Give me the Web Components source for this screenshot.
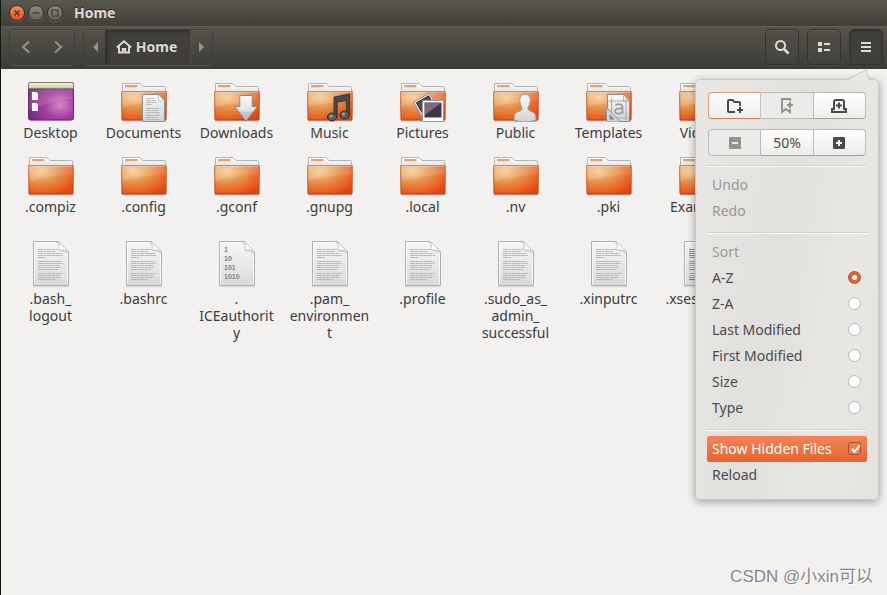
<!DOCTYPE html>
<html lang="en">
<head>
<meta charset="utf-8">
<title>Home</title>
<style>
html,body{margin:0;height:100%}
body{font:14px/17px "Noto Sans","Open Sans",sans-serif;color:#3c3c3c;background:#f2f1f0}
</style>
</head>
<body>
<file-window>
  <title-bar slot="title">Home</title-bar>
  <tool-bar slot="tools"><span>Home</span><view-menu slot="menu"></view-menu></tool-bar>
  <file-grid>
    <file-item kind="desktop">Desktop</file-item>
    <file-item kind="documents">Documents</file-item>
    <file-item kind="downloads">Downloads</file-item>
    <file-item kind="music">Music</file-item>
    <file-item kind="pictures">Pictures</file-item>
    <file-item kind="public">Public</file-item>
    <file-item kind="templates">Templates</file-item>
    <file-item kind="folder">Videos</file-item>
    <file-item kind="folder">.compiz</file-item>
    <file-item kind="folder">.config</file-item>
    <file-item kind="folder">.gconf</file-item>
    <file-item kind="folder">.gnupg</file-item>
    <file-item kind="folder">.local</file-item>
    <file-item kind="folder">.nv</file-item>
    <file-item kind="folder">.pki</file-item>
    <file-item kind="folder">Examples</file-item>
    <file-item kind="text">.bash_<br>logout</file-item>
    <file-item kind="text">.bashrc</file-item>
    <file-item kind="binary">.<br>ICEauthorit<br>y</file-item>
    <file-item kind="text">.pam_<br>environmen<br>t</file-item>
    <file-item kind="text">.profile</file-item>
    <file-item kind="text">.sudo_as_<br>admin_<br>successful</file-item>
    <file-item kind="text">.xinputrc</file-item>
    <file-item kind="log">.xsessionrc</file-item>
  </file-grid>
  <water-mark slot="mark">CSDN @小xin可以</water-mark>
</file-window>

<script>
const define = (name, html) => customElements.define(name, class extends HTMLElement {
  connectedCallback() {
    if (this.shadowRoot) return;
    const t = document.createElement('template');
    t.innerHTML = typeof html === 'function' ? html(this) : html;
    this.attachShadow({mode: 'open'}).append(t.content.cloneNode(true));
  }
});

define('file-window', `<style>
:host{display:flex;flex-direction:column;min-height:100vh;box-sizing:border-box;border-left:1px solid #10180c;background:#f2f1f0;position:relative}
main{flex:1;min-width:0;overflow:hidden}
footer{display:flex;justify-content:flex-end;padding:0 14px 8px 0}
</style><slot name="title"></slot><slot name="tools"></slot><main><slot></slot></main><footer><slot name="mark"></slot></footer>`);

define('water-mark', `<style>
:host{display:block;font:17px/20px "Liberation Sans","Noto Sans CJK SC",sans-serif;color:#85858a;text-shadow:1px 1px 0 #fff}
</style><slot></slot>`);

define('title-bar', `<style>
:host{display:flex;align-items:center;height:26px;padding:0 0 0 8px;background:linear-gradient(#5a574e,#3f3e39);color:#dfdbd2}
.set{display:flex;gap:3px}
button{width:16px;height:16px;padding:0;border:1px solid #32312d;border-radius:50%;background:linear-gradient(#8a877e,#64625b);box-shadow:0 1px 0 #65625a;display:grid;place-items:center}
.close{background:linear-gradient(#f58a63,#e4521f)}
svg{display:block;stroke:#3a3935;fill:none}
h1{margin:0 0 0 11px;font-size:14px;line-height:26px;font-weight:700;text-shadow:0 -1px 0 #2c2b28}
</style><div class="set">
<button class="close" aria-label="Close"><svg width="8" height="8"><path d="M1.5 1.5l5 5m0-5l-5 5" stroke-width="1.3"/></svg></button>
<button aria-label="Minimise"><svg width="8" height="8"><path d="M.5 4h7" stroke-width="1.2"/></svg></button>
<button aria-label="Maximise"><svg width="8" height="8"><path d="M1 1h6v6H1z" stroke-width="1.2"/></svg></button>
</div><h1><slot></slot></h1>`);

define('tool-bar', `<style>
:host{display:flex;align-items:center;gap:8px;height:43px;box-sizing:border-box;padding:0 4px 2px 8px;border-top:1px solid #625f51;background:linear-gradient(#56544b,#3c3b37);color:#dfdbd2;position:relative;z-index:2}
.group{display:flex;height:36px;box-sizing:border-box;border:1px solid #403f3a;border-radius:5px;box-shadow:0 1px 0 #55534b,inset 0 1px 0 #5d5a52}
button{font:inherit;color:inherit;margin:0;padding:0;border:0;background:none;display:flex;align-items:center;justify-content:center;box-sizing:border-box}
.nav button{width:32px}
.step{width:21px}
.here{width:86px;gap:4px;padding-right:3px;font-weight:700;line-height:34px;background:#403f3a;border-left:1px solid #34332f;border-right:1px solid #504e47;box-shadow:inset 2px 2px 3px #32312d;text-shadow:0 -1px 0 #2c2b28}
.sq{width:34px;height:36px;border:1px solid #33322e;border-radius:5px;box-shadow:inset 0 1px 0 #615e55,0 1px 0 #4c4a44;background:linear-gradient(#524f47,#42413c)}
.on{background:#403f3a;box-shadow:inset 0 1px 2px #2d2c29}
.gap{flex:1}
svg{display:block}
.menu{position:absolute;right:8px;top:42px}
</style>
<div class="group nav"><button aria-label="Back"><svg width="12" height="14" fill="none" stroke="#97948c" stroke-width="2"><path d="M9 1.5L3 7l6 5.500"/></svg></button><button aria-label="Forward"><svg width="12" height="14" fill="none" stroke="#97948c" stroke-width="2"><path d="M3 1.500L9 7l-6 5.500"/></svg></button></div>
<div class="group"><button class="step" aria-label="Scroll path left"><svg width="6" height="10"><path d="M6 0v10L1 5z" fill="#97948c"/></svg></button><button class="here"><svg width="16" height="14"><path d="M.8 7.500L8 1.300l7.200 6.200" fill="none" stroke="#dfdbd2" stroke-width="2"/><path d="M3 6.500v6h3.800V9h2.400v3.500H13v-6" fill="none" stroke="#dfdbd2" stroke-width="2"/></svg><slot></slot></button><button class="step" aria-label="Scroll path right"><svg width="6" height="10"><path d="M0 0v10l5-5z" fill="#97948c"/></svg></button></div>
<div class="gap"></div>
<button class="sq" aria-label="Search"><svg width="16" height="16" fill="none" stroke="#dfdbd2"><circle cx="6.500" cy="6.500" r="4.500" stroke-width="2"/><path d="M10 10l4.500 4.500" stroke-width="2.600"/></svg></button>
<button class="sq" aria-label="List view"><svg width="14" height="12" fill="#dfdbd2"><path d="M1 1h4v4H1zM7 2h6v2H7zM1 7h4v4H1zM7 8h6v2H7z"/></svg></button>
<button class="sq on" aria-label="Menu"><svg width="10" height="12" fill="#dfdbd2"><path d="M0 1h10v2H0zM0 5h10v2H0zM0 9h10v2H0z"/></svg></button>
<div class="menu"><slot name="menu"></slot></div>`);

define('file-grid', `<style>
:host{display:grid;grid-template-columns:repeat(8,93px);row-gap:15px;padding:13px 3px}
</style><slot></slot>`);

const lines = (ys, x, widths, colours) => ys.map((y, i) =>
  `<path d="M${x} ${y}h${widths[i]}" stroke="${colours ? colours[i] : '#b9b9b9'}" stroke-dasharray="5 .4 3 .3"/>`).join('');
const FOLDER = `<defs>
<radialGradient id="f" cx=".28" cy=".2" r=".9"><stop offset="0" stop-color="#f3c98c"/><stop offset=".45" stop-color="#e59048"/><stop offset=".85" stop-color="#eb5a1e"/><stop offset="1" stop-color="#dd4813"/></radialGradient>
<linearGradient id="b" x2="0" y2="1"><stop stop-color="#fff"/><stop offset="1" stop-color="#ddd"/></linearGradient>
<linearGradient id="g" x2="1" y2="1"><stop stop-color="#fff" stop-opacity=".28"/><stop offset="1" stop-color="#fff" stop-opacity=".03"/></linearGradient>
<linearGradient id="p" x2="0" y2="1"><stop stop-color="#fafafa"/><stop offset="1" stop-color="#d2d2d2"/></linearGradient>
<linearGradient id="e" x2="0" y2="1"><stop stop-color="#cf8a57"/><stop offset="1" stop-color="#b83a14"/></linearGradient></defs>
<path d="M2 38.700h44" stroke="#000" stroke-opacity=".18" stroke-width="1.500"/>
<path d="M2.500 12V1.500H19q1 0 2 1l2 2h21.500q1 0 1 1V12z" fill="url(#b)" stroke="#b4b4b4"/>
<path d="M5 3h12.500v2.200H5z" fill="#eda06c"/>
<path d="M1.500 9.500h45L46 37.500q0 .5-.5.5h-43q-.5 0-.5-.5z" fill="url(#f)" stroke="url(#e)"/>
<path d="M2.500 10.500h43v8Q24 19.500 2.500 25z" fill="url(#g)"/>
<path d="M2.500 10.500h43" stroke="#fff" stroke-opacity=".3"/>`;
const EMBLEM = {
  folder: '',
  documents: `<path d="M22.500 12.500h16l6 6.500v20.500h-22z" fill="url(#p)" stroke="#8e8e8e"/><path d="M38.500 12.500v6.500h6z" fill="#fff" stroke="#aaa" stroke-width=".6"/>${lines([16.5,18.5,20.5,22.5,26.5,28.5,30.5,33.5,35.5,37.5],26,[8,10,11,6,15,12,14,14,11,14])}`,
  downloads: `<path d="M26.800 13.500h12.400v11h5.300L33 39 21.500 24.500h5.300z" fill="url(#p)" stroke="#8f8a85" stroke-linejoin="round"/><path d="M33 39L25.500 29.500h15z" fill="#888" fill-opacity=".28"/>`,
  music: `<path d="M28 15l15.500-3v21.500h-3V18.500l-9.300 1.800V35.500H28z" fill="#4b4b4b" stroke="#2c2c2c" stroke-width=".8"/><ellipse cx="26" cy="35" rx="4.600" ry="4" fill="#5c5c5c" stroke="#2b2b2b"/><ellipse cx="38.500" cy="33" rx="4.600" ry="4" fill="#5c5c5c" stroke="#2b2b2b"/><circle cx="25" cy="34" r="1.500" fill="#a0a0a0"/><circle cx="37.500" cy="32" r="1.500" fill="#a0a0a0"/>`,
  pictures: `<g transform="rotate(-30 25 23)"><path d="M17.500 15.500h18v18h-18z" fill="#f7f7f7" stroke="#999"/><path d="M19.500 17.500h14v12h-14z" fill="#5b4a5c" stroke="#302935"/></g><path d="M23.500 18.500h21v21h-21z" fill="#fff" stroke="#999"/><path d="M25.500 20.500h17v15h-17z" fill="#41344a"/><path d="M26 21h16L26 33z" fill="#a08594" fill-opacity=".65"/>`,
  public: `<ellipse cx="33" cy="39.500" rx="11" ry="1.300" fill="#000" fill-opacity=".25"/><path d="M33 12.500c3.800 0 5.200 2.500 5.200 6 0 3-1.200 5.500-2.200 7 0 2.500.5 3 3.500 4 4 1.200 4.500 4 4.500 8.500q-5 2-11 2t-11-2c0-4.500.500-7.300 4.500-8.500 3-1 3.500-1.500 3.500-4-1-1.500-2.200-4-2.200-7 0-3.500 1.400-6 5.200-6z" fill="url(#p)" stroke="#9c9c9c"/>`,
  templates: `<path d="M22.500 12.500h16l6 6.500v20.500h-22z" fill="url(#p)" stroke="#8c8c96"/><path d="M38.500 12.500v6.500h6z" fill="#fff" stroke="#999" stroke-width=".7"/><path d="M23 19h21M23 36h21M26.500 16v22M41 16v22" stroke="#a8a8b3" fill="none"/><path d="M30.500 23q3.500-1.800 6 0 1 1 1 3v5.500M37.500 26.500q-7.500-.5-7.500 2.700c0 3.400 6 2.900 7.500.7" stroke="#9c9ca8" stroke-width="1.800" fill="none"/><path d="M21.500 25.500V40h14z" fill="#d5d5dc" stroke="#9090a0"/><path d="M24.500 32v5.500h5z" fill="#83838f"/>`
};
const DESKTOP = `<defs><radialGradient id="d" cx=".7" cy=".6" r=".75"><stop offset="0" stop-color="#d687c8"/><stop offset=".45" stop-color="#a93fa3"/><stop offset="1" stop-color="#6a2c79"/></radialGradient>
<linearGradient id="t" x2="0" y2="1"><stop stop-color="#f6f5e4"/><stop offset="1" stop-color="#c9c8ac"/></linearGradient></defs>
<path d="M4 38.800h40" stroke="#000" stroke-opacity=".15" stroke-width="1.500"/>
<rect x="1.500" y=".5" width="45" height="37.500" rx="2" fill="url(#d)" stroke="#742078"/>
<path d="M1.500 6.500V2.500q0-2 2-2h41q2 0 2 2v4z" fill="url(#t)" stroke="#85846b"/>
<path d="M2.500 7.500h43v9Q22 19 2.500 28z" fill="#fff" fill-opacity=".13"/>
<path d="M5 10h4.500l1.500 1.500V18H5zM5 21h4.500l1.500 1.500V29H5z" fill="#f8f4f8"/>`;
const PAPER = `<defs><linearGradient id="q" x2="0" y2="1"><stop stop-color="#f7f7f7"/><stop offset="1" stop-color="#dadada"/></linearGradient></defs>
<path d="M6 46.700h36" stroke="#000" stroke-opacity=".13"/>
<path d="M6.500 1.500h24.500l10.500 10v34h-35z" fill="url(#q)" stroke="#b0b0b0"/>
<path d="M7.500 44.500v-42h23M40.500 13v31.500" fill="none" stroke="#fff" stroke-opacity=".7"/>
<path d="M29 2q4 3 2.500 9.500 5-1 10 2.500v-2.500L31 1.500z" fill="#bbb" fill-opacity=".55"/>
<path d="M31 1.500q2.200 3 1 8.500 5-1 9.500 1.500z" fill="#fff" stroke="#bdbdbd" stroke-width=".6"/>`;
const YS = [9.5,11.5,13.5,15.5,17.5,21.5,23.5,25.5,27.5,29.5,33.5,35.5,37.5,39.5];
const WS = [20,18,24,25,8,24,25,22,23,20,25,23,22,17];
const LOG = ['#6f9ac0','#6f9ac0','#6f9ac0','#6f9ac0','#c77fd0','#c77fd0','#c77fd0','#8fc28f','#8fc28f','#999','#8fc28f','#8fc28f','#c77fd0','#d55'];
const icon = kind => {
  if (kind === 'desktop') return [40, DESKTOP];
  if (kind in EMBLEM) return [40, FOLDER + EMBLEM[kind]];
  if (kind === 'binary') return [48, PAPER + ['1','10','101','1010'].map((s, i) =>
    `<text x="11" y="${12 + i * 9}" font-family="Liberation Sans" font-size="7" font-weight="700" fill="#858585">${s}</text>`).join('')];
  return [48, PAPER + lines(YS, 11, WS, kind === 'log' ? LOG : null)];
};
define('file-item', el => {
  const [h, art] = icon(el.getAttribute('kind'));
  return `<style>
:host{display:flex;flex-direction:column;align-items:center;gap:2px;text-align:center;white-space:nowrap}
svg{display:block}
.tall{margin-top:10px}
</style><svg class="${h === 48 ? 'tall' : ''}" width="48" height="${h}" aria-hidden="true">${art}</svg><div><slot></slot></div>`;
});

const radios = ['A-Z','Z-A','Last Modified','First Modified','Size','Type'].map((s, i) =>
  `<label class="row">${s}<input type="radio" name="sort"${i ? '' : ' checked'}></label>`).join('');
define('view-menu', `<style>
:host{display:block;width:184px;box-sizing:border-box;margin-top:10px;padding:12px 11px 11px;border:1px solid #c9c7c3;border-radius:5px;background:linear-gradient(100deg,#e9e8e6,#e1e0dc 45%,#e8e7e4 75%,#e3e2df);box-shadow:0 2px 9px rgba(0,0,0,.35);color:#4c4c4c;position:relative}
.tip{position:absolute;right:8px;top:-12px}
svg{display:block}
.set{display:flex;height:27px;margin:0 1px 10px}
.set.zoom{margin-bottom:0}
button{font:inherit;color:inherit;margin:0;padding:0;border:0;background:none;text-align:left}
.set button{flex:1 1 0;display:flex;align-items:center;justify-content:center;box-sizing:border-box;border:1px solid #bcbab6;border-bottom-color:#a19f9b;border-left-width:0;background:linear-gradient(#fff,#ededec)}
.set button:first-child{border-left-width:1px;border-radius:4px 0 0 4px}
.set button:last-child{border-radius:0 4px 4px 0}
.set button:disabled{background:#ecebea;color:#95918c;border-bottom-color:#bcbab6}
.set button.focus{border-color:#e39a80 #c9c0bc #dc7a57 #e39a80}
hr{margin:9px 0 5px;border:0;border-top:1px solid #d3d2ce;height:1px;background:#f9f9f8}
.off+hr,.row+hr{margin-top:8px}
.row{display:flex;align-items:center;justify-content:space-between;width:100%;height:26px;box-sizing:border-box;padding:0 6px 1px 5px;border-radius:2px}
.off{color:#9a9792}
input{appearance:none;margin:0;width:13px;height:13px;box-sizing:border-box;border:1px solid #b9b7b3;background:#fff}
input[type=radio]{border-radius:50%}
input[type=radio]:checked{border-color:#bb4b23;background:radial-gradient(circle,#fff 2px,#de6538 3px)}
.hot{color:#fff;background:linear-gradient(#f58458,#e6642f)}
.hot input{border-color:#a84e2c;border-radius:3px;background:#e98055}
.check{display:grid;place-items:center}
.check>*{grid-area:1/1}
.check svg{z-index:1;pointer-events:none}
</style>
<svg class="tip" width="24" height="13"><path d="M1 12.500L20.500 1.500l2.500 11z" fill="#e9e8e6"/><path d="M0 11.500h2L20 1.500l3 10h1" fill="none" stroke="#c9c7c3"/></svg>
<div class="set">
<button class="focus" aria-label="New folder"><svg width="18" height="16" fill="none" stroke="#4a4a4a" stroke-width="2"><path d="M9 14H3q-1 0-1-1V3q0-1 1-1h3.500l2 2H13q1 0 1 1v3"/><path d="M14 9v6M11 12h6"/></svg></button>
<button disabled aria-label="Bookmark"><svg width="14" height="18" fill="none" stroke="#95918c" stroke-width="2"><path d="M10 4V2H2v13l4-3 4 3v-3"/><path d="M10 5v6M7 8h6"/></svg></button>
<button aria-label="New tab"><svg width="18" height="16" fill="none" stroke="#4a4a4a" stroke-width="2"><path d="M4 11V4q0-2 2-2h6q2 0 2 2v7"/><path d="M5 11H2v3h14v-3h-3"/><path d="M9 4.500v6M6 7.500h6"/></svg></button>
</div>
<div class="set zoom">
<button disabled aria-label="Zoom out"><svg width="12" height="12"><rect width="12" height="12" rx="1" fill="#95918c"/><path d="M3 6h6" stroke="#ecebea" stroke-width="2"/></svg></button>
<button>50%</button>
<button aria-label="Zoom in"><svg width="12" height="12"><rect width="12" height="12" rx="1" fill="#4a4a4a"/><path d="M3 6h6M6 3v6" stroke="#fff" stroke-width="2"/></svg></button>
</div>
<hr>
<button class="row off" disabled>Undo</button>
<button class="row off" disabled>Redo</button>
<hr>
<div class="row off">Sort</div>
${radios}
<hr>
<label class="row hot">Show Hidden Files<span class="check"><input type="checkbox" checked><svg width="12" height="12"><path d="M3 6l2.300 2.800L11 2.500" fill="none" stroke="#fff" stroke-width="2"/></svg></span></label>
<button class="row">Reload</button>`);
</script>
</body>
</html>
